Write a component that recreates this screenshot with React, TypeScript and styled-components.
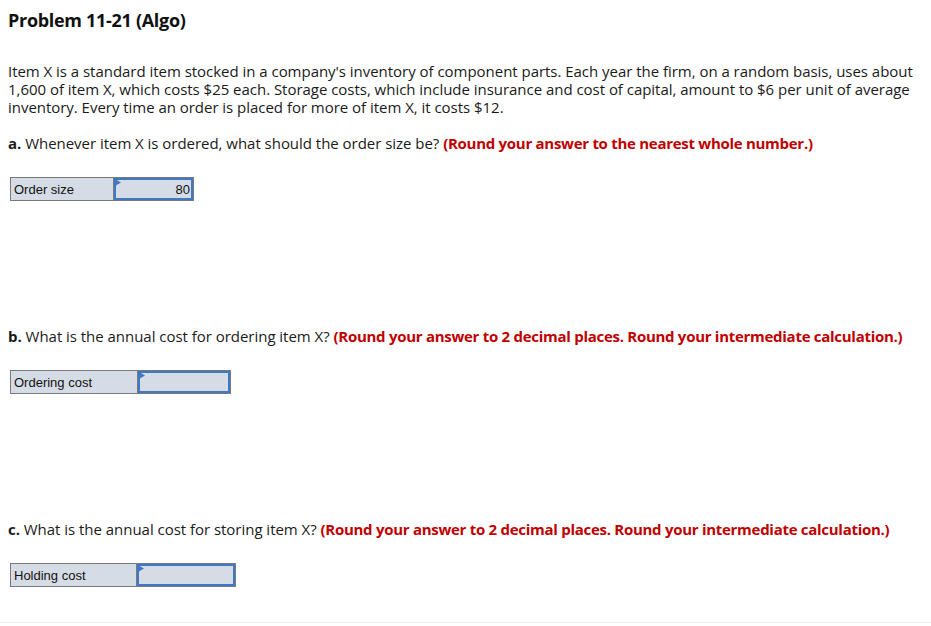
import * as React from 'react';
import styled, { createGlobalStyle } from 'styled-components';

const GlobalStyle = createGlobalStyle`
  html, body {
    margin: 0;
    padding: 0;
    background: #fff;
  }
  body {
    font-family: "Open Sans", Lato, sans-serif;
    color: #1a1a1a;
  }
`;

const DivPage = styled.div`
  width: 931px;
  height: 623px;
  box-sizing: border-box;
  padding: 9px 8px 0 8px;
  border-bottom: 1px solid #ececec;
  overflow: hidden;
`;

const H1Title = styled.h1`
  margin: 0;
  font-size: 18px;
  line-height: 22px;
  font-weight: 700;
  letter-spacing: -0.3px;
  color: #111;
`;

const PIntro = styled.p`
  margin: 31px 0 0 0;
  font-size: 15px;
  line-height: 18px;
  letter-spacing: -0.03px;
`;

const PQuestion = styled.p<{ $top: number }>`
  margin: ${props => props.$top}px 0 0 0;
  font-size: 15px;
  line-height: 18px;
  letter-spacing: -0.03px;
`;

const BLetter = styled.b`
  font-weight: 700;
`;

const SpanHint = styled.span`
  color: #c00000;
  font-weight: 700;
  letter-spacing: -0.28px;
`;

const DivAnswerRow = styled.div`
  margin: 25px 0 0 2px;
  display: flex;
  flex-direction: row;
  height: 24px;
  font-family: "Liberation Sans", Arial, sans-serif;
  font-size: 13px;
`;

const DivLabel = styled.div<{ $width: number }>`
  width: ${props => props.$width}px;
  box-sizing: border-box;
  border: 1px solid #7a7a7a;
  border-right: none;
  background: #d6dce5;
  color: #111;
  display: flex;
  align-items: center;
  padding-left: 3px;
`;

const DivInput = styled.div<{ $width: number }>`
  position: relative;
  width: ${props => props.$width}px;
  box-sizing: border-box;
  background: #d6dce5;
  display: flex;
  align-items: center;
  justify-content: flex-end;
  padding-right: 3px;
  color: #111;
  border: 1px solid #7a7a7a;
  box-shadow: inset 0 0 0 2px #3f78c4;
`;

const SvgFlag = styled.svg`
  position: absolute;
  left: 1px;
  top: 1px;
`;

function AnswerRow(props: { label: string, labelWidth: number, inputWidth: number, value?: string }) {
  return (
    <DivAnswerRow>
      <DivLabel $width={props.labelWidth}>{props.label}</DivLabel>
      <DivInput $width={props.inputWidth}>
        <SvgFlag width="6" height="7" viewBox="0 0 6 7">
          <path d="M0 0 L6 3.5 L0 7 Z" fill="#3f78c4" />
        </SvgFlag>
        {props.value}
      </DivInput>
    </DivAnswerRow>
  );
}

export default function App() {
  return (
    <>
      <GlobalStyle />
      <DivPage>
        <H1Title>Problem 11-21 (Algo)</H1Title>
        <PIntro>
          Item X is a standard item stocked in a company's inventory of component parts. Each year the firm, on a random basis, uses about 1,600 of item X, which costs $25 each. Storage costs, which include insurance and cost of capital, amount to $6 per unit of average inventory. Every time an order is placed for more of item X, it costs $12.
        </PIntro>
        <PQuestion $top={18}>
          <BLetter>a.</BLetter> Whenever item X is ordered, what should the order size be? <SpanHint>(Round your answer to the nearest whole number.)</SpanHint>
        </PQuestion>
        <AnswerRow label="Order size" labelWidth={103} inputWidth={81} value="80" />
        <PQuestion $top={126}>
          <BLetter>b.</BLetter> What is the annual cost for ordering item X? <SpanHint>(Round your answer to 2 decimal places. Round your intermediate calculation.)</SpanHint>
        </PQuestion>
        <AnswerRow label="Ordering cost" labelWidth={127} inputWidth={94} />
        <PQuestion $top={126}>
          <BLetter>c.</BLetter> What is the annual cost for storing item X? <SpanHint>(Round your answer to 2 decimal places. Round your intermediate calculation.)</SpanHint>
        </PQuestion>
        <AnswerRow label="Holding cost" labelWidth={126} inputWidth={100} />
      </DivPage>
    </>
  );
}
